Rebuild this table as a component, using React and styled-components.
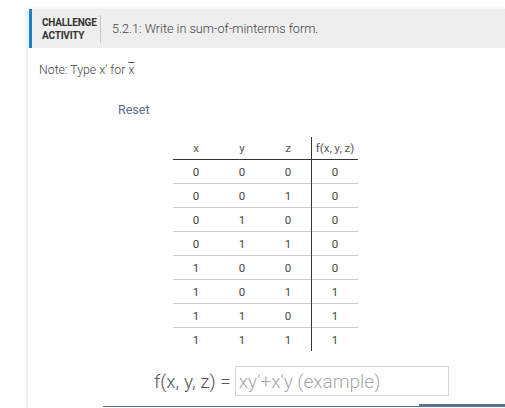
import React from "react";
import styled, { createGlobalStyle } from "styled-components";

const Global = createGlobalStyle`
  html, body { margin: 0; padding: 0; background: #fff; }
  body { font-family: Roboto, "Noto Sans", "Liberation Sans", sans-serif; overflow: hidden; }
`;

const Page = styled.div`
  width: 505px;
  height: 408px;
  padding: 9px 0 0 28px;
  box-sizing: border-box;
  overflow: hidden;
`;

const Card = styled.div`
  height: 100%;
  box-shadow: -1px 0 3px rgba(0, 0, 0, 0.12);
  display: flex;
  flex-direction: column;
`;

const Header = styled.div`
  height: 39px;
  background: #eeeeee;
  border-left: 3px solid #1b7fd0;
  margin-left: 1px;
  display: flex;
  align-items: center;
  padding-left: 10px;
`;

const Label = styled.div`
  font-size: 10px;
  font-weight: 700;
  line-height: 13px;
  color: #333;
  text-transform: uppercase;
  letter-spacing: -0.2px;
  width: 50px;
`;

const Divider = styled.div`
  width: 1px;
  height: 28px;
  background: #c8c8c8;
  margin: 0 11px 0 8px;
`;

const Title = styled.div`
  font-size: 12.6px;
  font-weight: 300;
  color: #444;
`;

const Body = styled.div`
  padding: 14px 0 0 11px;
  display: flex;
  flex-direction: column;
  align-items: flex-start;
  flex: 1;
`;

const Note = styled.div`
  font-size: 12.3px;
  line-height: 16px;
  font-weight: 300;
  color: #444;
`;

const Over = styled.span`
  text-decoration: overline;
`;

const ResetButton = styled.button`
  margin: 24px 0 0 79px;
  padding: 0;
  border: none;
  background: none;
  font-family: inherit;
  font-size: 12.5px;
  font-weight: 400;
  line-height: 16px;
  color: #5a6a88;
  cursor: pointer;
`;

const Table = styled.table`
  margin: 19px 0 0 134px;
  border-collapse: collapse;
  table-layout: fixed;
  font-size: 11.5px;
  color: #444;
`;

const Th = styled.th`
  width: 46px;
  height: 22px;
  padding: 0;
  font-weight: 400;
  color: #555;
  text-align: center;
  white-space: nowrap;
  border-bottom: 1px solid #333;
  border-left: ${(p) => (p.$out ? "1px solid #333" : "none")};
  vertical-align: middle;
`;

const Td = styled.td`
  width: 46px;
  height: 23px;
  padding: 0;
  text-align: center;
  border-top: ${(p) => (p.$first ? "none" : "1px solid #cccccc")};
  border-left: ${(p) => (p.$out ? "1px solid #333" : "none")};
`;

const Equation = styled.div`
  margin: 15px 0 0 115px;
  display: flex;
  align-items: center;
  gap: 4px;
  font-size: 19px;
  font-weight: 300;
  color: #555;
`;

const Input = styled.input`
  width: 214px;
  height: 30px;
  box-sizing: border-box;
  border: 1px solid #cfd8dc;
  padding: 0 3px;
  font-family: inherit;
  font-size: 19px;
  font-weight: 300;
  color: #555;
  outline: none;
  &::placeholder { color: #a8a8a8; }
`;

const Footer = styled.div`
  margin: 8px 0 0 64px;
  align-self: stretch;
  display: flex;
  align-items: flex-end;
`;

const Track = styled.div`
  flex: 0 0 316px;
  height: 1px;
  background: #5a7191;
`;

const Level = styled.div`
  flex: 1;
  height: 3px;
  background: #5a7191;
`;

const rows = [
  [0, 0, 0, 0],
  [0, 0, 1, 0],
  [0, 1, 0, 0],
  [0, 1, 1, 0],
  [1, 0, 0, 0],
  [1, 0, 1, 1],
  [1, 1, 0, 1],
  [1, 1, 1, 1],
];

export default function App() {
  return (
    <>
      <Global />
      <Page>
        <Card>
          <Header>
            <Label>Challenge Activity</Label>
            <Divider />
            <Title>5.2.1: Write in sum-of-minterms form.</Title>
          </Header>
          <Body>
            <Note>
              Note: Type x' for <Over>x</Over>
            </Note>
            <ResetButton>Reset</ResetButton>
            <Table>
              <thead>
                <tr>
                  <Th>x</Th>
                  <Th>y</Th>
                  <Th>z</Th>
                  <Th $out>f(x, y, z)</Th>
                </tr>
              </thead>
              <tbody>
                {rows.map((r, i) => (
                  <tr key={i}>
                    <Td $first={i === 0}>{r[0]}</Td>
                    <Td $first={i === 0}>{r[1]}</Td>
                    <Td $first={i === 0}>{r[2]}</Td>
                    <Td $first={i === 0} $out>{r[3]}</Td>
                  </tr>
                ))}
              </tbody>
            </Table>
            <Equation>
              <span>f(x, y, z) =</span>
              <Input placeholder="xy'+x'y (example)" />
            </Equation>
            <Footer>
              <Track />
              <Level />
            </Footer>
          </Body>
        </Card>
      </Page>
    </>
  );
}
